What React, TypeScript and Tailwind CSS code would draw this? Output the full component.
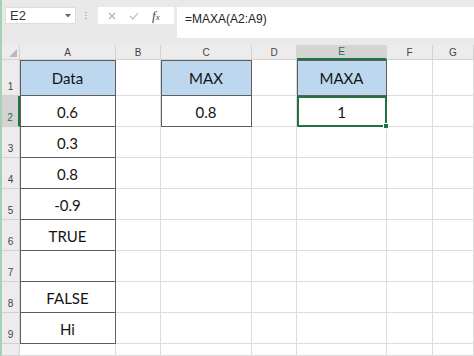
import React from "react";

const cols = ["A", "B", "C", "D", "E", "F", "G"];
const data: Record<string, string> = {
  A1: "Data",
  A2: "0.6",
  A3: "0.3",
  A4: "0.8",
  A5: "-0.9",
  A6: "TRUE",
  A7: "",
  A8: "FALSE",
  A9: "Hi",
  C1: "MAX",
  C2: "0.8",
  E1: "MAXA",
  E2: "1",
};
const blue = new Set(["A1", "C1", "E1"]);
const bordered = new Set([
  "A1", "A2", "A3", "A4", "A5", "A6", "A7", "A8", "A9",
  "C1", "C2", "E1", "E2",
]);

function Cell({ id, row }: { id: string; row: number }) {
  const isSel = id === "E2";
  const isB = bordered.has(id);
  let cls =
    "flex items-center justify-center border-r border-b pt-[2px] text-[15px] text-[#141414] font-['Lato',sans-serif]";
  if (isSel) {
    cls += " relative border-[#217346] shadow-[inset_2px_2px_0_#217346,inset_-1px_-1px_0_#217346]";
  } else if (isB) {
    cls +=
      row === 1
        ? " border-[#5e5e5e] shadow-[inset_1px_1px_0_#5e5e5e]"
        : " border-[#5e5e5e] shadow-[inset_1px_0_0_#5e5e5e]";
  } else {
    cls += " border-[#dcdcdc]";
  }
  if (blue.has(id)) cls += " bg-[#bdd7ee]";
  else cls += " bg-white";
  return (
    <div className={cls}>
      {data[id] ?? ""}
      {isSel && (
        <span className="absolute -right-[3px] -bottom-[3px] z-10 h-[6px] w-[6px] border border-white bg-[#217346]" />
      )}
    </div>
  );
}

export default function App() {
  const rows = [1, 2, 3, 4, 5, 6, 7, 8, 9, 10];
  return (
    <div className="flex h-[356px] w-[474px] overflow-hidden bg-white font-['Liberation_Sans',Arial,sans-serif]">
      <div className="w-[2px] shrink-0 bg-[#a3d2b5]" />
      <div className="flex min-w-0 flex-1 flex-col">
        {/* top bar */}
        <div className="flex h-[45px] shrink-0 items-start bg-[#e9e9e9] pl-[3px] pt-[7px]">
          <div className="flex h-[17px] w-[71px] items-center justify-between border border-[#dedede] bg-white pl-[4px] pr-[4px] text-[13px] text-[#333]">
            <span className="leading-none">E2</span>
            <svg width="6" height="4" viewBox="0 0 6 4">
              <path d="M0 0 L6 0 L3 3.5 Z" fill="#666" />
            </svg>
          </div>
          <div className="ml-[9px] mt-[5px] flex flex-col gap-[2px]">
            <span className="h-[1px] w-[2px] bg-[#b0b0b0]" />
            <span className="h-[1px] w-[2px] bg-[#b0b0b0]" />
            <span className="h-[1px] w-[2px] bg-[#b0b0b0]" />
          </div>
          <div className="ml-[11px] flex h-[17px] w-[76px] items-center bg-white text-[#a8a8a8]">
            <svg className="ml-[10px]" width="8" height="8" viewBox="0 0 8 8">
              <path d="M1 1 L7 7 M7 1 L1 7" stroke="#b0b0b0" strokeWidth="1.1" />
            </svg>
            <svg className="ml-[13px]" width="10" height="8" viewBox="0 0 10 8">
              <path d="M1 4.2 L3.8 7 L9 1" stroke="#b0b0b0" strokeWidth="1.1" fill="none" />
            </svg>
            <span className="ml-[13px] font-['Liberation_Serif',serif] text-[13px] italic leading-none text-[#444]">
              f<span className="text-[9px]">x</span>
            </span>
          </div>
          <div className="ml-[3px] h-[31px] flex-1 bg-white pl-[8px] pt-[3px] text-[12px] text-[#222]">
            =MAXA(A2:A9)
          </div>
        </div>
        {/* grid */}
        <div className="grid flex-1 grid-cols-[18px_96px_45px_91px_45px_90px_46px_1fr] grid-rows-[15px_36px_31px_31px_31px_31px_31px_31px_31px_31px_1fr]">
          <div className="flex items-end justify-end border-r border-b border-[#d2d2d2] bg-[#ececec] pb-[2px] pr-[2px]">
            <svg width="8" height="8" viewBox="0 0 8 8">
              <path d="M8 0 L8 8 L0 8 Z" fill="#b9b9b9" />
            </svg>
          </div>
          {cols.map((c) =>
            c === "E" ? (
              <div
                key={c}
                className="flex items-center justify-center border-r border-b-2 border-r-[#d2d2d2] border-b-[#217346] bg-[#d4d4d4] text-[10px] text-[#217346]"
              >
                {c}
              </div>
            ) : (
              <div
                key={c}
                className="flex items-center justify-center border-r border-b border-[#d2d2d2] bg-[#ececec] text-[10px] text-[#444]"
              >
                {c}
              </div>
            )
          )}
          {rows.map((r) => (
            <React.Fragment key={r}>
              {r === 2 ? (
                <div className="flex items-end justify-center border-r-2 border-b border-r-[#217346] border-b-[#d2d2d2] bg-[#d4d4d4] pb-[1px] text-[10px] text-[#217346]">
                  {r}
                </div>
              ) : (
                <div className="flex items-end justify-center border-r border-b border-[#d2d2d2] bg-[#ececec] pb-[1px] text-[10px] text-[#444]">
                  {r === 10 ? "" : r}
                </div>
              )}
              {cols.map((c) => (
                <Cell key={c + r} id={c + r} row={r} />
              ))}
            </React.Fragment>
          ))}
        </div>
      </div>
    </div>
  );
}
